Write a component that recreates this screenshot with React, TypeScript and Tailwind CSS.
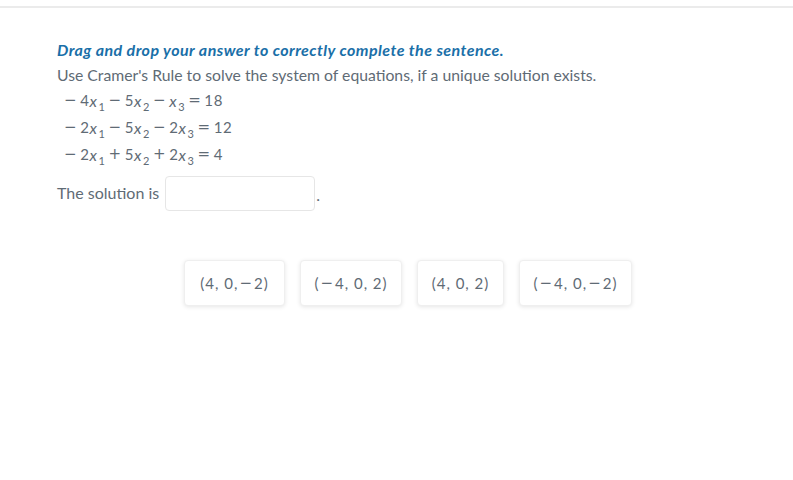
import React from "react";

const gray = "text-[#5f6b75]";

const V = ({ n }: { n: string }) => (
  <span className="inline-flex items-baseline">
    <span className="italic text-[16px]">x</span>
    <sub className="text-[11px] relative top-[4px] ml-[1px]">{n}</sub>
  </span>
);

const Op = ({ c }: { c: string }) => (
  <span className="mx-[3px]" style={{ fontFamily: "'DejaVu Sans', sans-serif" }}>
    {c}
  </span>
);

const Equation = ({ children }: { children: React.ReactNode }) => (
  <div className="h-[27px] flex items-center pl-[4px] text-[15px] tracking-[0.6px]">{children}</div>
);

const M = () => (
  <span className="mx-[1px]" style={{ fontFamily: "'DejaVu Sans', sans-serif" }}>
    −
  </span>
);

const choices = [
  { w: "w-[101px]", label: <>(4, 0, <M />2)</> },
  { w: "w-[102px]", label: <>(<M />4, 0, 2)</> },
  { w: "w-[87px]", label: <>(4, 0, 2)</> },
  { w: "w-[113px]", label: <>(<M />4, 0, <M />2)</> },
];

export default function App() {
  return (
    <div className={`w-[793px] h-[480px] bg-white ${gray}`} style={{ fontFamily: "Lato, 'Open Sans', sans-serif" }}>
      <div className="h-[6px]" />
      <div className="h-[2px] bg-[#ebebeb]" />
      <div className="pl-[57px] pt-[32px]">
        <p className="text-[16px] font-bold italic text-[#1a6fa8] leading-[20px] tracking-[0.45px]">
          Drag and drop your answer to correctly complete the sentence.
        </p>
        <p className="text-[15.75px] leading-[24px] mt-[3px]">
          Use Cramer's Rule to solve the system of equations, if a unique solution exists.
        </p>
        <Equation>
          <Op c="−" />4<V n="1" /><Op c="−" />5<V n="2" /><Op c="−" /><V n="3" /><Op c="=" />18
        </Equation>
        <Equation>
          <Op c="−" />2<V n="1" /><Op c="−" />5<V n="2" /><Op c="−" />2<V n="3" /><Op c="=" />12
        </Equation>
        <Equation>
          <Op c="−" />2<V n="1" /><Op c="+" />5<V n="2" /><Op c="+" />2<V n="3" /><Op c="=" />4
        </Equation>
        <div className="flex items-end mt-[8px] text-[16px]">
          <span className="leading-[24px] mb-[6px]">The solution is</span>
          <div className="ml-[6px] w-[150px] h-[35px] border border-[#e6e6e6] rounded-[4px]" />
          <span className="leading-[24px] mb-[4px] ml-[1px]">.</span>
        </div>
        <div className="flex gap-[15px] pl-[127px] mt-[49px]">
          {choices.map((c, i) => (
            <div
              key={i}
              className={`${c.w} h-[46px] flex items-center justify-center bg-white rounded-[4px] border border-[#efefef] shadow-[0_1px_4px_rgba(0,0,0,0.1)] text-[15px] tracking-[1px]`}
            >
              {c.label}
            </div>
          ))}
        </div>
      </div>
    </div>
  );
}
